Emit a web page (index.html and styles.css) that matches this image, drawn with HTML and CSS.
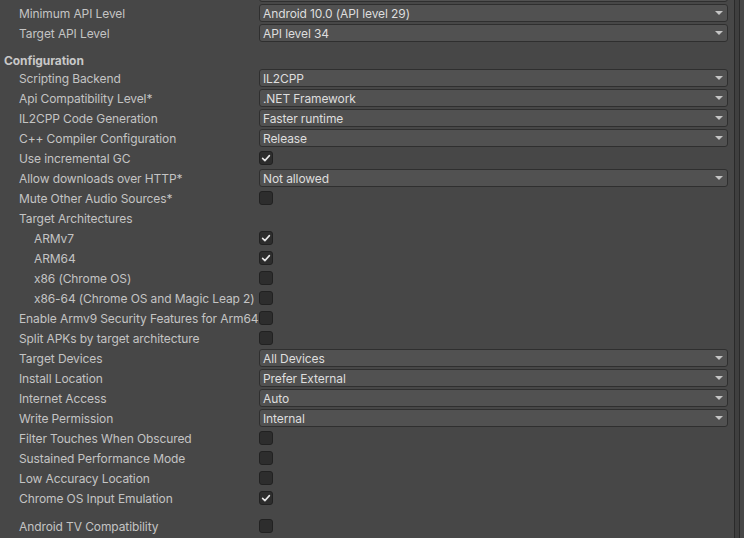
FILE: index.html
```html
<!DOCTYPE html>
<html>
<head>
<meta charset="utf-8">
<link rel="stylesheet" href="styles.css">
</head>
<body>
<div class="main">
  <div class="list">
    <div class="row"><span class="label"></span><div class="dropdown"><span class="val"></span><i class="arrow"></i></div></div>
    <div class="row"><span class="label">Minimum API Level</span><div class="dropdown"><span class="val">Android 10.0 (API level 29)</span><i class="arrow"></i></div></div>
    <div class="row"><span class="label">Target API Level</span><div class="dropdown"><span class="val">API level 34</span><i class="arrow"></i></div></div>

    <div class="header">Configuration</div>

    <div class="row"><span class="label">Scripting Backend</span><div class="dropdown"><span class="val">IL2CPP</span><i class="arrow"></i></div></div>
    <div class="row"><span class="label">Api Compatibility Level*</span><div class="dropdown"><span class="val">.NET Framework</span><i class="arrow"></i></div></div>
    <div class="row"><span class="label">IL2CPP Code Generation</span><div class="dropdown"><span class="val">Faster runtime</span><i class="arrow"></i></div></div>
    <div class="row"><span class="label">C++ Compiler Configuration</span><div class="dropdown"><span class="val">Release</span><i class="arrow"></i></div></div>
    <div class="row"><span class="label">Use incremental GC</span><span class="check on"><svg viewBox="0 0 14 14" width="14" height="14"><path d="M3.6 7.4 L5.9 9.6 L10.4 4.6"/></svg></span></div>
    <div class="row"><span class="label">Allow downloads over HTTP*</span><div class="dropdown"><span class="val">Not allowed</span><i class="arrow"></i></div></div>
    <div class="row"><span class="label">Mute Other Audio Sources*</span><span class="check"></span></div>
    <div class="row"><span class="label">Target Architectures</span></div>
    <div class="row"><span class="label sub">ARMv7</span><span class="check on"><svg viewBox="0 0 14 14" width="14" height="14"><path d="M3.6 7.4 L5.9 9.6 L10.4 4.6"/></svg></span></div>
    <div class="row"><span class="label sub">ARM64</span><span class="check on"><svg viewBox="0 0 14 14" width="14" height="14"><path d="M3.6 7.4 L5.9 9.6 L10.4 4.6"/></svg></span></div>
    <div class="row"><span class="label sub">x86 (Chrome OS)</span><span class="check"></span></div>
    <div class="row"><span class="label sub">x86-64 (Chrome OS and Magic Leap 2)</span><span class="check"></span></div>
    <div class="row"><span class="label">Enable Armv9 Security Features for Arm64</span><span class="check"></span></div>
    <div class="row"><span class="label">Split APKs by target architecture</span><span class="check"></span></div>
    <div class="row"><span class="label">Target Devices</span><div class="dropdown"><span class="val">All Devices</span><i class="arrow"></i></div></div>
    <div class="row"><span class="label">Install Location</span><div class="dropdown"><span class="val">Prefer External</span><i class="arrow"></i></div></div>
    <div class="row"><span class="label">Internet Access</span><div class="dropdown"><span class="val">Auto</span><i class="arrow"></i></div></div>
    <div class="row"><span class="label">Write Permission</span><div class="dropdown"><span class="val">Internal</span><i class="arrow"></i></div></div>
    <div class="row"><span class="label">Filter Touches When Obscured</span><span class="check"></span></div>
    <div class="row"><span class="label">Sustained Performance Mode</span><span class="check"></span></div>
    <div class="row"><span class="label">Low Accuracy Location</span><span class="check"></span></div>
    <div class="row"><span class="label">Chrome OS Input Emulation</span><span class="check on"><svg viewBox="0 0 14 14" width="14" height="14"><path d="M3.6 7.4 L5.9 9.6 L10.4 4.6"/></svg></span></div>
    <div class="row spaced"><span class="label">Android TV Compatibility</span><span class="check"></span></div>
  </div>
</div>
<div class="scrollbar"><div class="track"></div></div>
</body>
</html>
```
FILE: styles.css
```css
html, body {
  margin: 0;
  padding: 0;
}
body {
  width: 744px;
  height: 538px;
  overflow: hidden;
  background: #474747;
  display: flex;
  font-family: Inter, "Noto Sans", "DejaVu Sans", sans-serif;
  font-size: 12px;
  letter-spacing: -0.1px;
  color: #c4c4c4;
}
.main {
  width: 734px;
  flex: none;
  overflow: hidden;
}
.list {
  margin-top: -17px;
  padding: 0 6px 0 19px;
}
.row {
  height: 20px;
  display: grid;
  grid-template-columns: 240px 1fr;
  align-items: center;
}
.row.spaced {
  margin-top: 8px;
}
.label {
  white-space: nowrap;
  padding-top: 2px;
  line-height: 18px;
  height: 20px;
  box-sizing: border-box;
}
.label.sub {
  padding-left: 15px;
}
.header {
  margin-left: -15px;
  padding-top: 9px;
  height: 16px;
  line-height: 17px;
  font-weight: 700;
  color: #c8c8c8;
}
.dropdown {
  height: 18px;
  box-sizing: border-box;
  border: 1px solid #2f2f2f;
  border-radius: 3px;
  background: #515151;
  display: flex;
  align-items: center;
  justify-content: space-between;
  padding: 0 4px 0 3px;
  color: #dedede;
}
.val {
  white-space: nowrap;
  padding-top: 2px;
  line-height: 14px;
  height: 16px;
  box-sizing: border-box;
}
.arrow {
  width: 0;
  height: 0;
  border-left: 4px solid transparent;
  border-right: 4px solid transparent;
  border-top: 4px solid #c4c4c4;
}
.check {
  width: 14px;
  height: 14px;
  box-sizing: border-box;
  border: 1px solid #212121;
  border-radius: 3px;
  background: #2d2d2d;
  display: block;
  position: relative;
}
.check svg {
  position: absolute;
  left: -1px;
  top: -1px;
  fill: none;
  stroke: #e6e6e6;
  stroke-width: 1.6;
  stroke-linecap: round;
  stroke-linejoin: round;
}
.scrollbar {
  width: 10px;
  flex: none;
  box-sizing: border-box;
  border-left: 1px solid #2a2a2a;
  display: flex;
}
.track {
  width: 4px;
  background: #3f3f3f;
  border-right: 1px solid #2a2a2a;
}
```
